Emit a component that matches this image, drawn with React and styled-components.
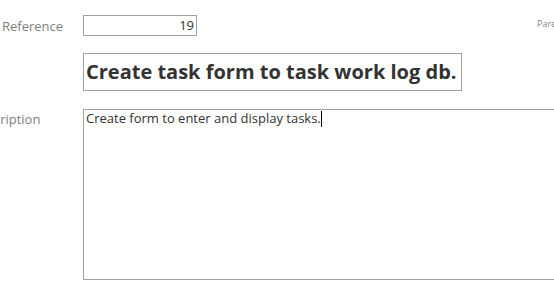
import React from 'react';
import styled, { createGlobalStyle } from 'styled-components';

const Global = createGlobalStyle`
  html, body { margin: 0; padding: 0; background: #fff; }
  body { font-family: "Open Sans", "Liberation Sans", sans-serif; }
`;

const Page = styled.div`
  width: 554px;
  height: 291px;
  overflow: hidden;
  display: flex;
  flex-direction: column;
  padding-top: 15px;
  box-sizing: border-box;
`;

const Row = styled.div`
  display: flex;
  align-items: ${p => p.$align || 'center'};
  margin-top: ${p => p.$gap || 0}px;
  white-space: nowrap;
`;

const Label = styled.div`
  width: ${p => 83 - (p.$shift || 0)}px;
  flex: none;
  font-size: 13px;
  color: #7f7f7f;
  margin-left: ${p => p.$shift || 0}px;
  padding-left: 2px;
  box-sizing: border-box;
  padding-top: ${p => p.$top || 0}px;
`;

const NumBox = styled.div`
  width: 114px;
  height: 21px;
  flex: none;
  box-sizing: border-box;
  border: 1px solid #a0a0a0;
  text-align: right;
  font-size: 13px;
  line-height: 19px;
  color: #333;
  padding-right: 2px;
`;

const SideNote = styled.div`
  flex: none;
  margin-left: 340px;
  font-size: 9px;
  color: #7f8c7f;
  margin-top: -4px;
`;

const TitleBox = styled.div`
  flex: none;
  margin-left: 83px;
  width: 379px;
  height: 38px;
  box-sizing: border-box;
  border: 1px solid #a0a0a0;
  font-size: 20px;
  font-weight: 700;
  color: #333;
  line-height: 36px;
  padding-left: 2px;
`;

const DescBox = styled.div`
  width: 480px;
  height: 171px;
  flex: none;
  box-sizing: border-box;
  border: 1px solid #a0a0a0;
  font-size: 13px;
  color: #333;
  line-height: 17px;
  padding: 0 2px;
`;

const Caret = styled.span`
  display: inline-block;
  width: 1px;
  height: 16px;
  background: #000;
  vertical-align: -4px;
`;

export default function App() {
  return (
    <Page>
      <Global />
      <Row>
        <Label>Reference</Label>
        <NumBox>19</NumBox>
        <SideNote>Parent</SideNote>
      </Row>
      <Row $gap={17}>
        <TitleBox>Create task form to task work log db.</TitleBox>
      </Row>
      <Row $gap={18} $align="flex-start">
        <Label $shift={-31} $top={1}>Description</Label>
        <DescBox>
          Create form to enter and display tasks.<Caret />
        </DescBox>
      </Row>
    </Page>
  );
}
